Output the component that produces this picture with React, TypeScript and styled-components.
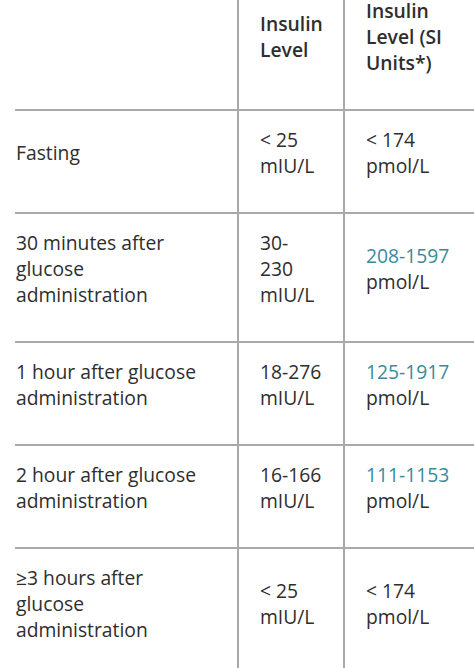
import React from "react";
import styled, { createGlobalStyle } from "styled-components";

const Global = createGlobalStyle`
  html, body { margin: 0; padding: 0; background: #ffffff; }
  body { font-family: "Open Sans", "Liberation Sans", sans-serif; color: #2e2e2e; overflow: hidden; }
`;

const Page = styled.div`
  width: 474px;
  height: 668px;
  overflow: hidden;
  padding-left: 15px;
  box-sizing: border-box;
`;

const Table = styled.div`
  display: grid;
  grid-template-columns: 222px 106px 140px;
  margin-top: -18px;
  width: 468px;
`;

const Cell = styled.div<{ $col: number; $head?: boolean }>`
  box-sizing: border-box;
  padding: ${(p) => (p.$col === 0 ? "16px 30px 33px 1px" : "16px 6px 33px 21px")};
  border-left: ${(p) => (p.$col === 0 ? "none" : "2px solid #a9a9a9")};
  border-bottom: 2px solid #a9a9a9;
  display: flex;
  align-items: center;
  font-size: 19.3px;
  line-height: 26px;
  font-weight: ${(p) => (p.$head ? 600 : 400)};
  color: #2e2e2e;
`;

const Text = styled.div``;

const Accent = styled.span`
  color: #3a8b9c;
`;

type Row = { label: string; a: React.ReactNode; b: React.ReactNode };

const rows: Row[] = [
  { label: "Fasting", a: <>&lt; 25<br />mIU/L</>, b: <>&lt; 174<br />pmol/L</> },
  {
    label: "30 minutes after glucose administration",
    a: <>30-<br />230<br />mIU/L</>,
    b: <><Accent>208-1597</Accent><br />pmol/L</>,
  },
  {
    label: "1 hour after glucose administration",
    a: <>18-276<br />mIU/L</>,
    b: <><Accent>125-1917</Accent><br />pmol/L</>,
  },
  {
    label: "2 hour after glucose administration",
    a: <>16-166<br />mIU/L</>,
    b: <><Accent>111-1153</Accent><br />pmol/L</>,
  },
  {
    label: "≥3 hours after glucose administration",
    a: <>&lt; 25<br />mIU/L</>,
    b: <>&lt; 174<br />pmol/L</>,
  },
];

export default function App() {
  return (
    <>
      <Global />
      <Page>
        <Table>
          <Cell $col={0} $head />
          <Cell $col={1} $head><Text>Insulin<br />Level</Text></Cell>
          <Cell $col={2} $head><Text>Insulin<br />Level (SI<br />Units*)</Text></Cell>
          {rows.map((r) => (
            <React.Fragment key={r.label}>
              <Cell $col={0}><Text>{r.label}</Text></Cell>
              <Cell $col={1}><Text>{r.a}</Text></Cell>
              <Cell $col={2}><Text>{r.b}</Text></Cell>
            </React.Fragment>
          ))}
        </Table>
      </Page>
    </>
  );
}
